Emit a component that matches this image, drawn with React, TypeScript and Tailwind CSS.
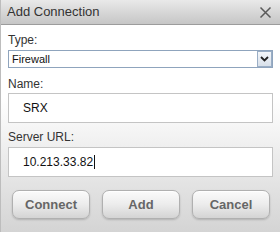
import React from 'react';

const font = { fontFamily: 'Arial, "Liberation Sans", sans-serif' };

function DialogButton({ label }: { label: string }) {
  return (
    <button className="flex h-[29px] w-[78px] items-center justify-center rounded-[7px] border border-[#b0b0b0] bg-gradient-to-b from-[#fbfbfb] via-[#ececec] to-[#d4d4d4] text-[13px] font-bold text-[#666] shadow-[inset_0_1px_0_#fff,0_1px_2px_rgba(0,0,0,0.18)]">
      {label}
    </button>
  );
}

export default function App() {
  return (
    <div className="flex h-[232px] w-[280px] flex-col overflow-hidden border-l border-[#bdbdbd] bg-white" style={font}>
      {/* Title bar */}
      <div className="flex h-[25px] shrink-0 items-center justify-between border-b border-[#9c9c9c] bg-gradient-to-b from-[#e9e9e9] to-[#c6c6c6] pl-[6px] pr-[6px]">
        <span className="text-[13px] text-[#333]">Add Connection</span>
        <svg width="13" height="13" viewBox="0 0 13 13" className="mr-[2px]">
          <path d="M1.5 1.5 L11.5 11.5 M11.5 1.5 L1.5 11.5" stroke="#5a5a5a" strokeWidth="1.5" />
        </svg>
      </div>

      {/* Body */}
      <div className="flex flex-1 flex-col bg-gradient-to-b from-white from-[35%] to-[#d4d4d4] px-[7px] pt-[8px]">
        <label className="text-[12px] leading-[14px] text-[#333]">Type:</label>
        <div className="mt-[3px] flex h-[18px] items-center border border-[#8fa4bd] bg-white">
          <span className="flex-1 pl-[3px] text-[11px] text-[#111]">Firewall</span>
          <div className="flex h-[16px] w-[15px] items-center justify-center border border-[#9aaec6] bg-gradient-to-b from-[#f3f6fa] to-[#d8e0ea]">
            <svg width="9" height="6" viewBox="0 0 9 6">
              <path d="M1 1 L4.5 4.5 L8 1" fill="none" stroke="#222" strokeWidth="1.8" />
            </svg>
          </div>
        </div>

        <label className="mt-[9px] text-[12px] leading-[14px] text-[#333]">Name:</label>
        <div className="mt-[2px] flex h-[30px] items-center border border-[#c4c4c4] bg-white pl-[14px] text-[12px] text-[#111]">
          SRX
        </div>

        <label className="mt-[7px] text-[12px] leading-[14px] text-[#333]">Server URL:</label>
        <div className="mt-[3px] flex h-[30px] items-center border border-[#c4c4c4] bg-white pl-[14px] text-[12px] text-[#111]">
          10.213.33.82
          <span className="ml-[1px] h-[14px] w-px bg-[#111]" />
        </div>

        <div className="mt-[13px] flex gap-[12px] pl-[4px]">
          <DialogButton label="Connect" />
          <DialogButton label="Add" />
          <DialogButton label="Cancel" />
        </div>
      </div>
    </div>
  );
}
